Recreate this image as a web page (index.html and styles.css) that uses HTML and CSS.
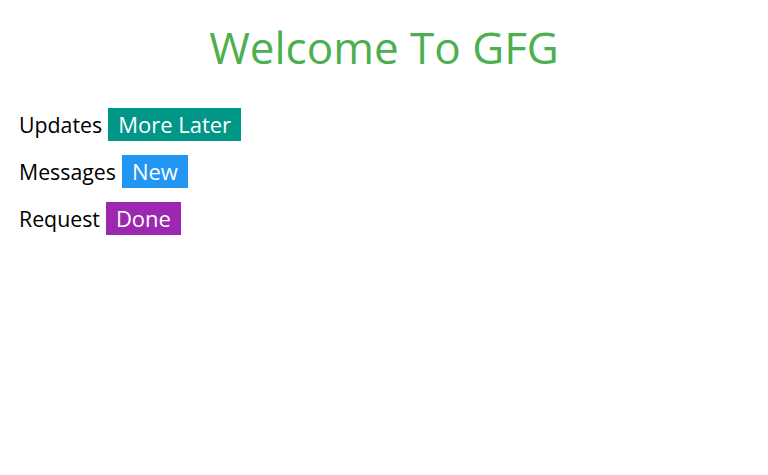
FILE: index.html
```html
<!DOCTYPE html>
<html>
<head>
<meta charset="utf-8">
<link rel="stylesheet" href="styles.css">
</head>
<body>
<h1 class="title">Welcome To GFG</h1>
<div class="list">
  <p class="row">Updates <span class="tag teal">More Later</span></p>
  <p class="row">Messages <span class="tag blue">New</span></p>
  <p class="row">Request <span class="tag purple">Done</span></p>
</div>
</body>
</html>
```
FILE: styles.css
```css
html, body {
  margin: 0;
  padding: 0;
  background: #fff;
}
body {
  font-family: "Open Sans", "Noto Sans", sans-serif;
  color: #000;
  padding: 0 19px;
}
.title {
  margin: 0;
  padding-top: 17px;
  text-align: center;
  font-weight: 400;
  font-size: 44px;
  line-height: 60px;
  color: #4CAF50;
}
.list {
  margin-top: 31px;
  display: flex;
  flex-direction: column;
  gap: 14px;
}
.row {
  margin: 0;
  font-size: 21.3px;
  line-height: 33px;
  display: flex;
  align-items: center;
  gap: 6px;
}
.tag {
  display: inline-block;
  color: #fff;
  font-size: 22px;
  padding: 0 10px;
  height: 33px;
  line-height: 33px;
}
.teal { background: #009688; }
.blue { background: #2196F3; }
.purple { background: #9c27b0; }
```
